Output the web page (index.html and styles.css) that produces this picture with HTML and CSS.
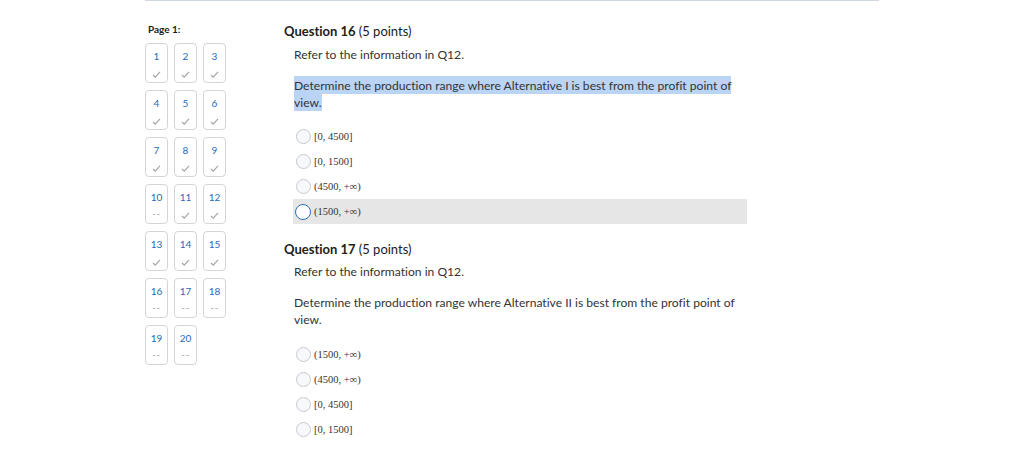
FILE: index.html
```html
<!DOCTYPE html>
<html lang="en">
<head>
<meta charset="utf-8">
<title>Quiz</title>
<link rel="stylesheet" href="styles.css">
</head>
<body>
<div class="page">
  <aside class="sidebar">
    <div class="page-label">Page 1:</div>
    <div class="tiles">
      <div class="tile"><span class="num">1</span><svg class="chk" viewBox="0 0 10 8"><polyline points="1,4.5 3.6,7 9,1"/></svg></div>
      <div class="tile"><span class="num">2</span><svg class="chk" viewBox="0 0 10 8"><polyline points="1,4.5 3.6,7 9,1"/></svg></div>
      <div class="tile"><span class="num">3</span><svg class="chk" viewBox="0 0 10 8"><polyline points="1,4.5 3.6,7 9,1"/></svg></div>
      <div class="tile"><span class="num">4</span><svg class="chk" viewBox="0 0 10 8"><polyline points="1,4.5 3.6,7 9,1"/></svg></div>
      <div class="tile"><span class="num">5</span><svg class="chk" viewBox="0 0 10 8"><polyline points="1,4.5 3.6,7 9,1"/></svg></div>
      <div class="tile"><span class="num">6</span><svg class="chk" viewBox="0 0 10 8"><polyline points="1,4.5 3.6,7 9,1"/></svg></div>
      <div class="tile"><span class="num">7</span><svg class="chk" viewBox="0 0 10 8"><polyline points="1,4.5 3.6,7 9,1"/></svg></div>
      <div class="tile"><span class="num">8</span><svg class="chk" viewBox="0 0 10 8"><polyline points="1,4.5 3.6,7 9,1"/></svg></div>
      <div class="tile"><span class="num">9</span><svg class="chk" viewBox="0 0 10 8"><polyline points="1,4.5 3.6,7 9,1"/></svg></div>
      <div class="tile"><span class="num">10</span><span class="dash">--</span></div>
      <div class="tile"><span class="num">11</span><svg class="chk" viewBox="0 0 10 8"><polyline points="1,4.5 3.6,7 9,1"/></svg></div>
      <div class="tile"><span class="num">12</span><svg class="chk" viewBox="0 0 10 8"><polyline points="1,4.5 3.6,7 9,1"/></svg></div>
      <div class="tile"><span class="num">13</span><svg class="chk" viewBox="0 0 10 8"><polyline points="1,4.5 3.6,7 9,1"/></svg></div>
      <div class="tile"><span class="num">14</span><svg class="chk" viewBox="0 0 10 8"><polyline points="1,4.5 3.6,7 9,1"/></svg></div>
      <div class="tile"><span class="num">15</span><svg class="chk" viewBox="0 0 10 8"><polyline points="1,4.5 3.6,7 9,1"/></svg></div>
      <div class="tile"><span class="num">16</span><span class="dash">--</span></div>
      <div class="tile"><span class="num">17</span><span class="dash">--</span></div>
      <div class="tile"><span class="num">18</span><span class="dash">--</span></div>
      <div class="tile"><span class="num">19</span><span class="dash">--</span></div>
      <div class="tile"><span class="num">20</span><span class="dash">--</span></div>
    </div>
  </aside>
  <main class="main">
    <section class="question">
      <h2 class="q-title">Question 16 <span class="pts">(5 points)</span></h2>
      <div class="q-body">
        <p class="q-text">Refer to the information in Q12.</p>
        <p class="q-text q-gap"><span class="sel">Determine the production range where Alternative I is best from the profit point of view.</span></p>
      </div>
      <ul class="options">
        <li class="opt"><span class="radio"></span><span class="lbl">[0, 4500]</span></li>
        <li class="opt"><span class="radio"></span><span class="lbl">[0, 1500]</span></li>
        <li class="opt"><span class="radio"></span><span class="lbl">(4500, +∞)</span></li>
        <li class="opt opt-focus"><span class="radio radio-focus"></span><span class="lbl">(1500, +∞)</span></li>
      </ul>
    </section>
    <section class="question q-next">
      <h2 class="q-title">Question 17 <span class="pts">(5 points)</span></h2>
      <div class="q-body">
        <p class="q-text">Refer to the information in Q12.</p>
        <p class="q-text q-gap">Determine the production range where Alternative II is best from the profit point of view.</p>
      </div>
      <ul class="options">
        <li class="opt"><span class="radio"></span><span class="lbl">(1500, +∞)</span></li>
        <li class="opt"><span class="radio"></span><span class="lbl">(4500, +∞)</span></li>
        <li class="opt"><span class="radio"></span><span class="lbl">[0, 4500]</span></li>
        <li class="opt"><span class="radio"></span><span class="lbl">[0, 1500]</span></li>
      </ul>
    </section>
  </main>
</div>
</body>
</html>
```

FILE: styles.css
```css
* { box-sizing: border-box; }
html, body { margin: 0; padding: 0; background: #fff; }
body {
  font-family: Lato, "Open Sans", sans-serif;
  color: #494c4e;
  font-variant-ligatures: none;
}

.page {
  width: 734px;
  margin: 0 auto;
  border-top: 1px solid #cfd7e0;
  display: flex;
}

.sidebar { width: 139px; padding-top: 21px; }
.page-label {
  font-size: 10px;
  font-weight: 700;
  line-height: 14px;
  color: #1c1c1c;
  padding-left: 3px;
  margin-bottom: 7px;
}
.tiles {
  display: grid;
  grid-template-columns: repeat(3, 23px);
  grid-auto-rows: 40px;
  column-gap: 6px;
  row-gap: 7px;
}
.tile {
  border: 1px solid #d3d6d9;
  border-radius: 4px;
  display: flex;
  flex-direction: column;
  align-items: center;
  padding-top: 5px;
}
.num {
  font-size: 10px;
  line-height: 14px;
  color: #2a68b4;
}
.chk {
  width: 9px;
  height: 7px;
  margin-top: 8px;
  fill: none;
  stroke: #a3a6a9;
  stroke-width: 1.4;
}
.dash {
  font-size: 10px;
  line-height: 12px;
  margin-top: 3px;
  color: #a3a6a9;
  letter-spacing: 0.5px;
}

.main { flex: 1; padding-top: 22px; }
.q-title {
  margin: 0;
  font-size: 13px;
  line-height: 16px;
  font-weight: 700;
  color: #202122;
}
.pts { font-weight: 400; }
.q-body { padding-left: 10px; margin-top: 6.5px; }
.q-text {
  margin: 0;
  font-size: 12.1px;
  line-height: 17px;
  color: #333;
  max-width: 450px;
}
.q-gap { margin-top: 14px; }
.sel { background: #bad4f5; padding: 1.5px 0; }

.options {
  list-style: none;
  margin: 13.5px 0 0 9px;
  padding: 0;
  width: 454px;
}
.opt {
  height: 25px;
  display: flex;
  align-items: center;
  padding-left: 3px;
}
.opt-focus { background: #e6e6e6; }
.radio {
  width: 15px;
  height: 15px;
  border-radius: 50%;
  border: 1px solid #c6c9cc;
  background: #f7f8fb;
  margin-right: 3px;
  flex: none;
}
.radio-focus {
  width: 16px;
  height: 16px;
  border: 1.5px solid #2f6dc3;
  background: #fff;
  margin-left: -1px;
  margin-right: 3px;
}
.lbl {
  font-family: "Liberation Serif", "Times New Roman", serif;
  font-size: 10.5px;
  color: #333;
}

.q-next { margin-top: 16.5px; }
```
